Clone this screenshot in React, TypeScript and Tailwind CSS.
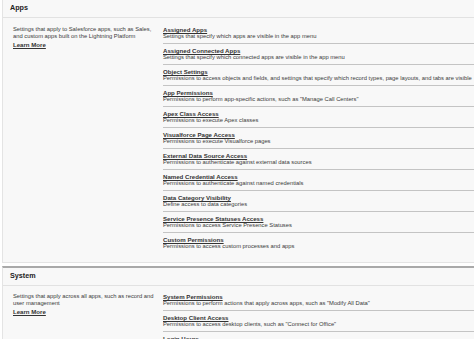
const APPS = [
  { title: "Assigned Apps", desc: "Settings that specify which apps are visible in the app menu" },
  { title: "Assigned Connected Apps", desc: "Settings that specify which connected apps are visible in the app menu" },
  {
    title: "Object Settings",
    desc: "Permissions to access objects and fields, and settings that specify which record types, page layouts, and tabs are visible",
  },
  { title: "App Permissions", desc: 'Permissions to perform app-specific actions, such as "Manage Call Centers"' },
  { title: "Apex Class Access", desc: "Permissions to execute Apex classes" },
  { title: "Visualforce Page Access", desc: "Permissions to execute Visualforce pages" },
  { title: "External Data Source Access", desc: "Permissions to authenticate against external data sources" },
  { title: "Named Credential Access", desc: "Permissions to authenticate against named credentials" },
  { title: "Data Category Visibility", desc: "Define access to data categories" },
  { title: "Service Presence Statuses Access", desc: "Permissions to access Service Presence Statuses" },
  { title: "Custom Permissions", desc: "Permissions to access custom processes and apps" },
];

const SYSTEM = [
  { title: "System Permissions", desc: 'Permissions to perform actions that apply across apps, such as "Modify All Data"' },
  { title: "Desktop Client Access", desc: 'Permissions to access desktop clients, such as "Connect for Office"' },
  { title: "Login Hours", desc: "Hours during which users can log in" },
];

function Item({ title, desc, last }: { title: string; desc: string; last?: boolean }) {
  return (
    <div className={last ? "pt-[3px] pb-[3px]" : "border-b border-[#c4c4c4] pt-[3px] pb-[3px]"}>
      <a className="block text-[6.1px] leading-[7px] font-bold text-[#333] underline whitespace-nowrap">{title}</a>
      <div className="text-[5.8px] leading-[7px] text-[#3a3a3a] whitespace-nowrap">{desc}</div>
    </div>
  );
}

function Header({ name }: { name: string }) {
  return (
    <div className="h-[18px] flex items-center pl-[7px] border-b border-[#e2e2e2] text-[7.2px] font-bold text-[#222]">
      {name}
    </div>
  );
}

function Blurb({ lines }: { lines: string[] }) {
  return (
    <div className="w-[160px] shrink-0 pl-[10px] pt-[3px] text-[5.8px] leading-[7px] text-[#3a3a3a]">
      {lines.map((b) => (
        <div key={b} className="whitespace-nowrap">{b}</div>
      ))}
      <a className="block text-[6.1px] leading-[9px] font-bold underline text-[#333]">Learn More</a>
    </div>
  );
}

export default function App() {
  return (
    <div
      className="w-[474px] h-[339px] overflow-hidden bg-white"
      style={{ fontFamily: '"Liberation Sans", Arial, sans-serif' }}
    >
      {/* Apps */}
      <div className="pb-[9px] bg-[#f8f8f8] ml-[2px] border-l border-b border-[#e4e4e4]">
        <Header name="Apps" />
        <div className="flex pt-[5px]">
          <Blurb
            lines={[
              "Settings that apply to Salesforce apps, such as Sales,",
              "and custom apps built on the Lightning Platform",
            ]}
          />
          <div className="flex-1 min-w-0">
            {APPS.map((it, i) => (
              <Item key={it.title} title={it.title} desc={it.desc} last={i === APPS.length - 1} />
            ))}
          </div>
        </div>
      </div>

      <div className="h-[3px]" />

      {/* System */}
      <div className="ml-[2px] border-l border-[#e4e4e4] border-t-[2px] border-t-[#a9a9a9] bg-[#f8f8f8]">
        <Header name="System" />
        <div className="flex pt-[4px]">
          <Blurb lines={["Settings that apply across all apps, such as record and", "user management"]} />
          <div className="flex-1 min-w-0">
            {SYSTEM.map((it) => (
              <Item key={it.title} title={it.title} desc={it.desc} />
            ))}
          </div>
        </div>
      </div>
    </div>
  );
}
